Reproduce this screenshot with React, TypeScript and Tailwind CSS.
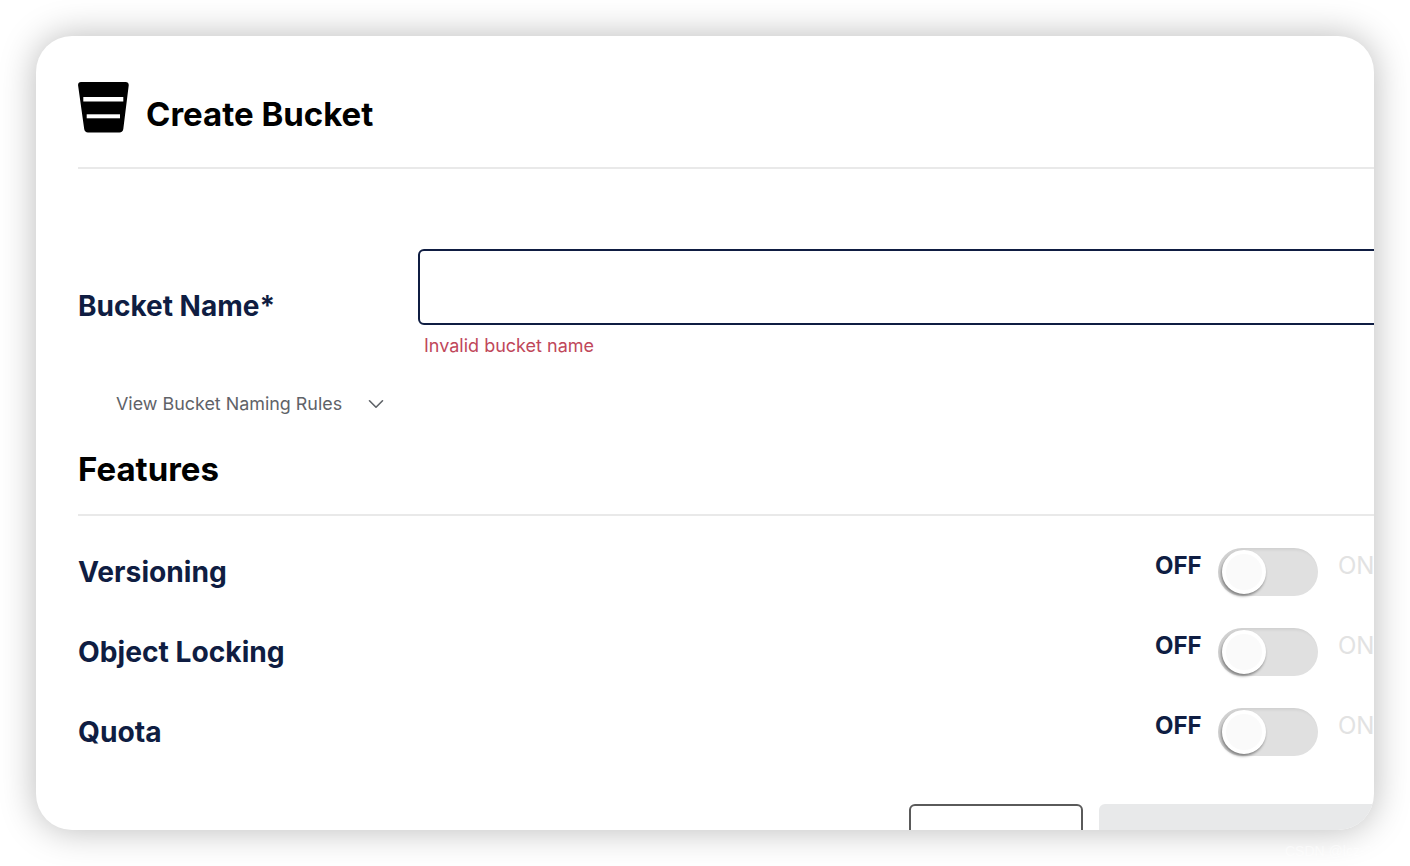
import { ChevronDown } from 'lucide-react'

const inter = 'font-["Inter","Noto_Sans",sans-serif]'

const BucketIcon = () => (
    <svg width="52" height="52" viewBox="0 0 52 52" className="shrink-0">
        <path
            d="M3 0H47.7C49.7 0 51 1.5 50.7 3.5L45.3 47C45 49.2 43.6 50.5 41.5 50.5H10C7.9 50.5 6.5 49.2 6.2 47L0.1 3.5C-0.2 1.5 1 0 3 0Z"
            fill="#000"
        />
        <rect x="5.3" y="15" width="40" height="4.5" fill="#fff" />
        <rect x="8.7" y="32.3" width="33.3" height="4" fill="#fff" />
    </svg>
)

const FeatureRow = ({ label }: { label: string }) => (
    <div className="flex h-20 items-start">
        <div className="w-[1077px] text-[28.2px] leading-[48px] font-bold text-[#0f1d42]">{label}</div>
        <div className="w-[63px] pt-[3px] text-2xl leading-[30px] font-bold text-[#0f1d42]">OFF</div>
        <div className="relative h-12 w-[100px] rounded-full bg-[#e0e0e0] shadow-[inset_2px_2px_3px_rgba(0,0,0,0.07)]">
            <div className="absolute top-0.5 left-1 h-11 w-11 rounded-full border-4 border-white bg-[#fafafa] shadow-[-1px_2px_3px_rgba(0,0,0,0.45)]" />
        </div>
        <div className="ml-5 pt-[3px] text-2xl leading-[30px] font-normal text-[#e2e2e2]">ON</div>
    </div>
)

export default function App() {
    return (
        <div className={`${inter} relative h-[866px] w-[1410px] overflow-hidden bg-white px-9 pt-9`}>
            <div className="h-[794px] w-[1338px] overflow-hidden rounded-[36px] bg-white pt-[46px] pl-[42px] shadow-[0_0_36px_rgba(0,0,0,0.28)]">
                <div className="w-[1420px]">
                    <div className="flex h-[87px] items-start gap-4 border-b-2 border-[#e9e9e9]">
                        <BucketIcon />
                        <h1 className="mt-3 text-[33px] leading-[40px] font-bold text-black">Create Bucket</h1>
                    </div>

                    <div className="mt-20 flex items-start">
                        <label className="mt-[37px] w-[340px] text-[28px] leading-[40px] font-bold text-[#0f1d42]">
                            Bucket Name*
                        </label>
                        <div>
                            <input className="block h-[76px] w-[1080px] rounded-md border-2 border-[#0f1d42] bg-white outline-none" />
                            <div className="mt-[9px] ml-1.5 text-lg leading-6 text-[#c0475a]">Invalid bucket name</div>
                        </div>
                    </div>

                    <div className="mt-[34px] flex h-6 items-center pl-[38px] text-[17.9px] leading-6 text-[#5f6368]">
                        <span>View Bucket Naming Rules</span>
                        <ChevronDown size={26} strokeWidth={1.5} className="ml-[21px]" />
                    </div>

                    <h2 className="mt-[33px] h-[65px] text-[33px] leading-[40px] font-bold text-black">Features</h2>
                    <div className="mb-8 h-0.5 bg-[#e9e9e9]" />

                    <div className="flex flex-col">
                        <FeatureRow label="Versioning" />
                        <FeatureRow label="Object Locking" />
                        <FeatureRow label="Quota" />
                    </div>

                    <div className="mt-4 flex gap-4 pl-[831px]">
                        <button className="h-12 w-[174px] rounded-md border-2 border-[#5a5a5a] bg-white" />
                        <button className="h-12 w-[300px] rounded-md bg-[#e8e9ea]" />
                    </div>
                </div>
            </div>
            <div className="absolute top-[841px] left-[1285px] font-['Liberation_Sans',sans-serif] text-sm leading-5 whitespace-nowrap text-white/50">
                CSDN @lcz-20
            </div>
        </div>
    )
}
